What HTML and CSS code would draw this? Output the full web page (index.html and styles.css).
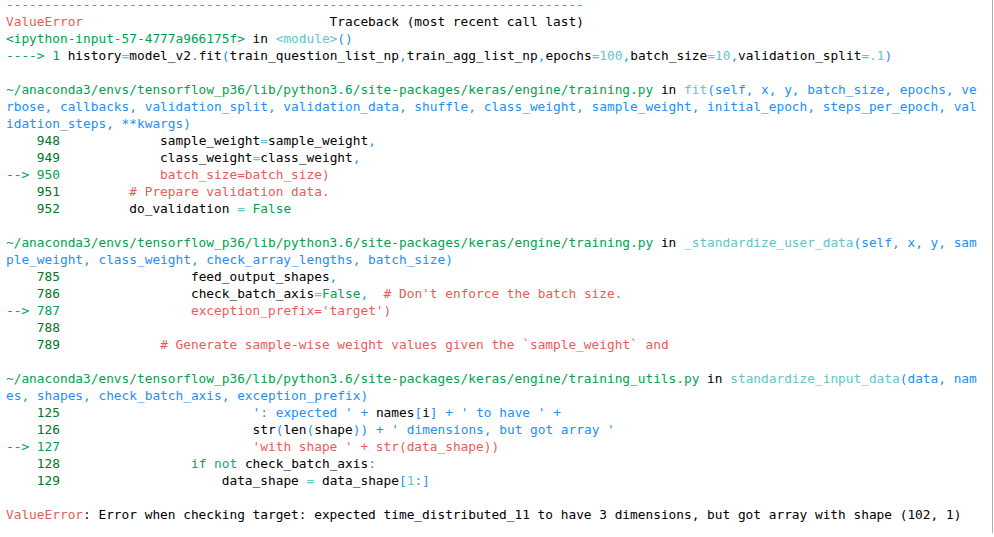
FILE: index.html
```html
<!DOCTYPE html>
<html lang="en">
<head>
    <meta charset="UTF-8">
    <title>Traceback</title>
    <link rel="stylesheet" href="styles.css">
</head>
<body>
    <div class="output">
<pre class="trace"><span class="r">---------------------------------------------------------------------------</span>
<span class="r">ValueError</span>                                Traceback (most recent call last)
<span class="g">&lt;ipython-input-57-4777a966175f&gt;</span> in <span class="c">&lt;module&gt;</span><span class="b">()</span>
<span class="g">----&gt; 1 </span>history<span class="c">=</span>model_v2<span class="b">.</span>fit<span class="b">(</span>train_question_list_np<span class="b">,</span>train_agg_list_np<span class="b">,</span>epochs<span class="c">=100</span><span class="b">,</span>batch_size<span class="c">=10</span><span class="b">,</span>validation_split<span class="c">=.1</span><span class="b">)</span>

<span class="g">~/anaconda3/envs/tensorflow_p36/lib/python3.6/site-packages/keras/engine/training.py</span> in <span class="c">fit</span><span class="b">(self, x, y, batch_size, epochs, verbose, callbacks, validation_split, validation_data, shuffle, class_weight, sample_weight, initial_epoch, steps_per_epoch, validation_steps, **kwargs)</span>
<span class="n">    948</span>             sample_weight<span class="c">=</span>sample_weight<span class="b">,</span>
<span class="n">    949</span>             class_weight<span class="c">=</span>class_weight<span class="b">,</span>
<span class="g">--&gt; 950</span> <span class="r">            batch_size=batch_size)</span>
<span class="n">    951</span>         <span class="r"># Prepare validation data.</span>
<span class="n">    952</span>         do_validation <span class="c">=</span> <span class="g">False</span>

<span class="g">~/anaconda3/envs/tensorflow_p36/lib/python3.6/site-packages/keras/engine/training.py</span> in <span class="c">_standardize_user_data</span><span class="b">(self, x, y, sample_weight, class_weight, check_array_lengths, batch_size)</span>
<span class="n">    785</span>                 feed_output_shapes<span class="b">,</span>
<span class="n">    786</span>                 check_batch_axis<span class="c">=</span><span class="g">False</span><span class="b">,</span>  <span class="r"># Don't enforce the batch size.</span>
<span class="g">--&gt; 787</span> <span class="r">                exception_prefix='target')</span>
<span class="n">    788</span>
<span class="n">    789</span>             <span class="r"># Generate sample-wise weight values given the `sample_weight` and</span>

<span class="g">~/anaconda3/envs/tensorflow_p36/lib/python3.6/site-packages/keras/engine/training_utils.py</span> in <span class="c">standardize_input_data</span><span class="b">(data, names, shapes, check_batch_axis, exception_prefix)</span>
<span class="n">    125</span>                         <span class="b">': expected '</span> <span class="b">+</span> names<span class="b">[</span>i<span class="b">]</span> <span class="b">+</span> <span class="b">' to have '</span> <span class="b">+</span>
<span class="n">    126</span>                         str<span class="b">(</span>len<span class="b">(</span>shape<span class="b">))</span> <span class="b">+</span> <span class="b">' dimensions, but got array '</span>
<span class="g">--&gt; 127</span> <span class="r">                        'with shape ' + str(data_shape))</span>
<span class="n">    128</span>                 <span class="g">if</span> <span class="t">not</span> check_batch_axis<span class="b">:</span>
<span class="n">    129</span>                     data_shape <span class="c">=</span> data_shape<span class="b">[</span><span class="c">1</span><span class="b">:]</span>

<span class="r">ValueError</span>: Error when checking target: expected time_distributed_11 to have 3 dimensions, but got array with shape (102, 1)
</pre>
    </div>
</body>
</html>
```

FILE: styles.css
```css
html, body {
    margin: 0;
    padding: 0;
    background-color: #fff;
    overflow: hidden;
}

.output {
    width: 992px;
    min-height: 100vh;
    border-right: 1px solid #adadad;
}

.trace {
    margin: -4px 0 0 0;
    padding-left: 6px;
    width: 975px;
    font-family: "DejaVu Sans Mono", "Liberation Mono", monospace;
    font-size: 12.8px;
    line-height: 17px;
    color: #000;
    white-space: pre-wrap;
    word-break: break-all;
}

.r {
    color: #e75c58;
}

.g {
    color: #00a250;
}

.n {
    color: #007427;
}

.c {
    color: #60c6c8;
}

.b {
    color: #208ffb;
}

.t {
    color: #10a38a;
}
```
